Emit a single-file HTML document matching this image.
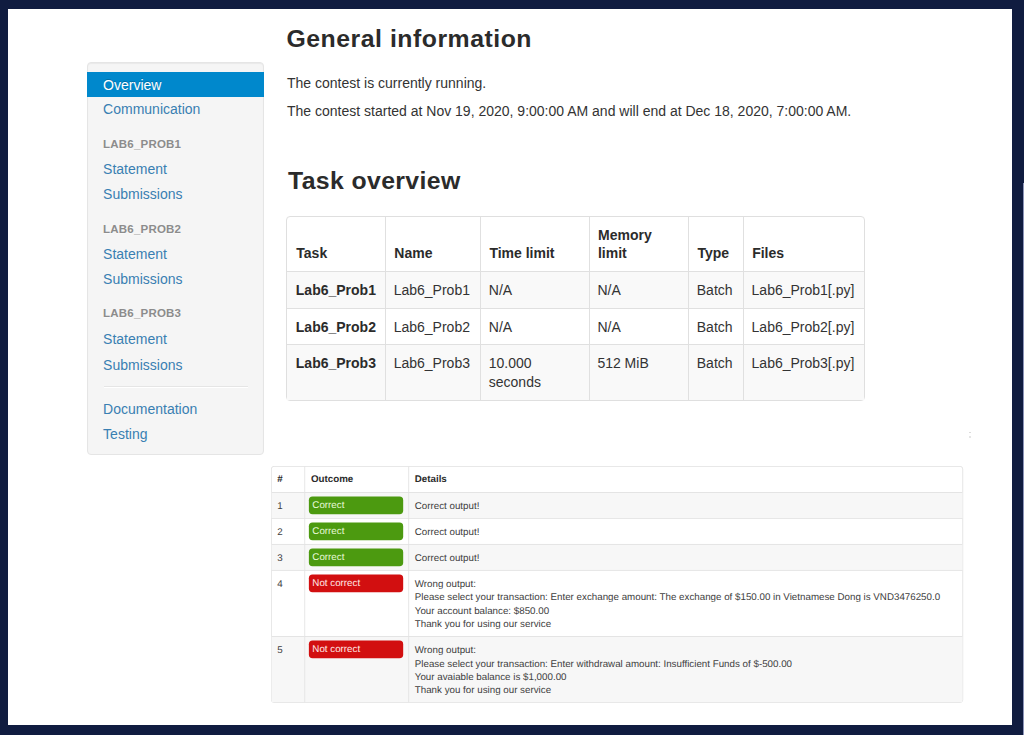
<!DOCTYPE html>
<html>
<head>
<meta charset="utf-8">
<title>Contest overview</title>
<style>
html,body{margin:0;padding:0;}
body{width:1024px;height:735px;overflow:hidden;background:#101c40;font-family:"Liberation Sans",sans-serif;color:#333;position:relative;}
#page{position:absolute;left:8px;top:9px;width:1004px;height:716px;background:#fff;}
#stripe{position:absolute;left:1023px;top:183px;width:1px;height:552px;background:#8c94b8;}
.abs{position:absolute;white-space:nowrap;}

/* sidebar */
#well{position:absolute;left:86.6px;top:62px;width:175.4px;height:390.7px;background:#f5f5f5;border:1px solid #e5e5e5;border-radius:4px;box-shadow:inset 0 1px 1px rgba(0,0,0,.05);}
#well .it{position:absolute;left:0;width:175.4px;height:25px;line-height:25px;font-size:14px;color:#397fb2;}
#well .it span{position:absolute;left:15.5px;top:0;}
#well .act span{left:16.5px;}
#well .act{left:-1px;width:177.4px;padding-left:1px;box-sizing:border-box;background:#0088cc;color:#fff;text-shadow:0 -1px 0 rgba(0,0,0,.2);}
#well .hd{position:absolute;left:15.5px;height:25px;line-height:25px;font-size:11.5px;font-weight:bold;color:#8c8c8c;letter-spacing:.2px;text-shadow:0 1px 0 rgba(255,255,255,.5);}
#well .dv{position:absolute;left:16px;width:144px;height:1px;background:#e5e5e5;border-bottom:1px solid #fff;}

/* headings */
h2{position:absolute;margin:0;left:286.5px;font-size:24.8px;line-height:36px;font-weight:bold;letter-spacing:.52px;color:#2b2b2b;white-space:nowrap;}
p{position:absolute;margin:0;left:287px;font-size:14px;line-height:19px;white-space:nowrap;color:#333;}

/* table 1 */
#t1{position:absolute;left:286px;top:216px;width:579px;border:1px solid #dfdfdf;border-radius:4px;border-collapse:separate;border-spacing:0;table-layout:fixed;font-size:14px;line-height:18.7px;box-sizing:border-box;}
#t1 th,#t1 td{padding:9.2px 8px 6.6px 8.3px;text-align:left;vertical-align:top;border-top:1px solid #e0e0e0;border-left:1px solid #e0e0e0;box-sizing:border-box;}
#t1 th{line-height:18.2px;vertical-align:bottom;font-weight:bold;border-top:0;color:#2b2b2b;padding-top:8px;padding-bottom:8.8px;}
#t1 th:first-child,#t1 td:first-child{border-left:0;}
#t1 tr.odd td{background:#f9f9f9;}
#t1 td{padding-left:7.7px;}
#t1 th:first-child{padding-left:9.3px;}
#t1 td.b{font-weight:bold;color:#2b2b2b;padding-left:8.8px;}

/* table 2 : native bootstrap metrics scaled down by .7426 */
#t2w{position:absolute;left:270.63px;top:466.03px;width:932px;transform:scale(.7426);transform-origin:0 0;}
#t2{text-rendering:geometricPrecision;width:932px;border:1px solid #dcdcdc;border-radius:4px;border-collapse:separate;border-spacing:0;table-layout:fixed;font-size:13.17px;line-height:18px;box-sizing:border-box;color:#404040;}
#t2 th,#t2 td{padding:9px 8px 7px 7.8px;text-align:left;vertical-align:top;border-top:1px solid #dedede;border-left:1px solid #dedede;box-sizing:border-box;}
#t2 th{font-weight:bold;border-top:0;color:#2b2b2b;padding-top:8px;padding-bottom:8px;}
#t2 th:first-child,#t2 td:first-child{border-left:0;padding-left:7.5px;}
#t2 tr.odd td{background:#f7f7f7;}
#t2 td.o{padding:5px 6.4px 0 4.7px;}
#t2 .bd{display:block;height:24px;line-height:24.5px;border-radius:5px;color:#fff;padding-left:5px;box-sizing:border-box;}
#t2 .g{background:#4c9a10;color:#e6f9d8;}
#t2 .r{background:#d20f10;color:#ffe9e6;}
</style>
</head>
<body>
<div id="page"></div>
<div id="stripe"></div>
<div style="position:absolute;left:969.3px;top:431.6px;width:2.2px;height:1.6px;background:#d6d6d6;border-radius:1px"></div>
<div style="position:absolute;left:969.3px;top:435.6px;width:2.2px;height:2px;background:#dcdcdc;border-radius:1px"></div>

<div id="well">
  <div class="it act" style="top:8.5px"><span style="top:1.3px">Overview</span></div>
  <div class="it" style="top:34px"><span>Communication</span></div>
  <div class="hd" style="top:68.5px">LAB6_PROB1</div>
  <div class="it" style="top:94px"><span>Statement</span></div>
  <div class="it" style="top:119.2px"><span>Submissions</span></div>
  <div class="hd" style="top:153.5px">LAB6_PROB2</div>
  <div class="it" style="top:178.7px"><span>Statement</span></div>
  <div class="it" style="top:204px"><span>Submissions</span></div>
  <div class="hd" style="top:238.3px">LAB6_PROB3</div>
  <div class="it" style="top:263.7px"><span>Statement</span></div>
  <div class="it" style="top:289.5px"><span>Submissions</span></div>
  <div class="dv" style="top:322.5px"></div>
  <div class="it" style="top:333.7px"><span>Documentation</span></div>
  <div class="it" style="top:358.5px"><span>Testing</span></div>
</div>

<h2 style="top:20.6px">General information</h2>
<p style="top:73.7px">The contest is currently running.</p>
<p style="top:102px">The contest started at Nov 19, 2020, 9:00:00 AM and will end at Dec 18, 2020, 7:00:00 AM.</p>
<h2 style="top:163.1px;left:288px;letter-spacing:.38px">Task overview</h2>

<table id="t1">
  <colgroup><col style="width:98px"><col style="width:95.1px"><col style="width:108.6px"><col style="width:99.4px"><col style="width:54.8px"><col style="width:121.2px"></colgroup>
  <tr style="height:54px"><th>Task</th><th>Name</th><th>Time limit</th><th>Memory<br>limit</th><th>Type</th><th>Files</th></tr>
  <tr class="odd" style="height:36.6px"><td class="b">Lab6_Prob1</td><td>Lab6_Prob1</td><td>N/A</td><td>N/A</td><td>Batch</td><td>Lab6_Prob1[.py]</td></tr>
  <tr style="height:36.6px"><td class="b">Lab6_Prob2</td><td>Lab6_Prob2</td><td>N/A</td><td>N/A</td><td>Batch</td><td>Lab6_Prob2[.py]</td></tr>
  <tr class="odd" style="height:55.6px"><td class="b">Lab6_Prob3</td><td>Lab6_Prob3</td><td>10.000<br>seconds</td><td>512 MiB</td><td>Batch</td><td>Lab6_Prob3[.py]</td></tr>
</table>

<div id="t2w"><table id="t2">
  <colgroup><col style="width:44px"><col style="width:139.8px"><col style="width:746.2px"></colgroup>
  <tr style="height:34px"><th>#</th><th>Outcome</th><th>Details</th></tr>
  <tr class="odd" style="height:35px"><td>1</td><td class="o"><span class="bd g">Correct</span></td><td>Correct output!</td></tr>
  <tr style="height:35px"><td>2</td><td class="o"><span class="bd g">Correct</span></td><td>Correct output!</td></tr>
  <tr class="odd" style="height:35px"><td>3</td><td class="o"><span class="bd g">Correct</span></td><td>Correct output!</td></tr>
  <tr style="height:89px"><td>4</td><td class="o"><span class="bd r">Not correct</span></td><td>Wrong output:<br>Please select your transaction: Enter exchange amount: The exchange of $150.00 in Vietnamese Dong is VND3476250.0<br>Your account balance: $850.00<br>Thank you for using our service</td></tr>
  <tr class="odd" style="height:89px"><td>5</td><td class="o"><span class="bd r">Not correct</span></td><td>Wrong output:<br>Please select your transaction: Enter withdrawal amount: Insufficient Funds of $-500.00<br>Your avaiable balance is $1,000.00<br>Thank you for using our service</td></tr>
</table></div>

</body>
</html>
